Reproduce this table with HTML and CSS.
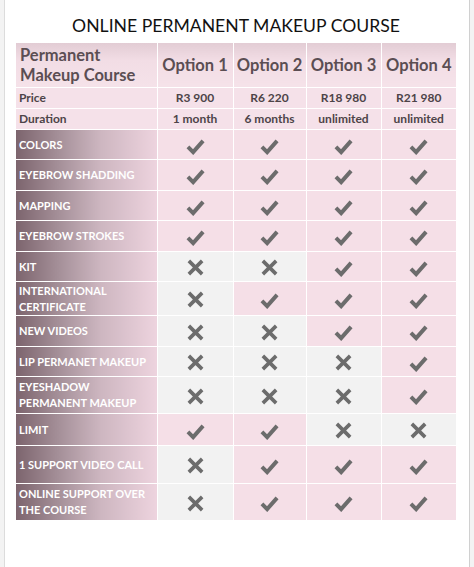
FILE: index.html
```html
<!DOCTYPE html>
<html>
<head>
<meta charset="utf-8">
<link rel="stylesheet" href="styles.css">
</head>
<body>
<svg class="defs" width="0" height="0">
  <symbol id="chk" viewBox="0 0 20 18"><path d="M2 9.5 L7.5 15 L18 3" fill="none" stroke="currentColor" stroke-width="4.2"/></symbol>
  <symbol id="crs" viewBox="0 0 20 20"><path d="M3 3 L17 17 M17 3 L3 17" fill="none" stroke="currentColor" stroke-width="3.8"/></symbol>
</svg>
<div class="page">
  <h1 class="title">ONLINE PERMANENT MAKEUP COURSE</h1>
  <table class="grid">
    <colgroup><col class="c0"><col class="c1"><col class="c2"><col class="c3"><col class="c4"></colgroup>
    <tr class="head"><th class="lbl">Permanent<br>Makeup Course</th><th>Option 1</th><th>Option 2</th><th>Option 3</th><th>Option 4</th></tr>
    <tr class="info r-price"><td class="lbl">Price</td><td>R3 900</td><td>R6 220</td><td>R18 980</td><td>R21 980</td></tr>
    <tr class="info r-dur"><td class="lbl">Duration</td><td>1 month</td><td>6 months</td><td>unlimited</td><td>unlimited</td></tr>
    <tr class="f h30"><td class="feat">COLORS</td><td class="y"><svg class="ic ck"><use href="#chk"/></svg></td><td class="y"><svg class="ic ck"><use href="#chk"/></svg></td><td class="y"><svg class="ic ck"><use href="#chk"/></svg></td><td class="y"><svg class="ic ck"><use href="#chk"/></svg></td></tr>
    <tr class="f h31"><td class="feat">EYEBROW SHADDING</td><td class="y"><svg class="ic ck"><use href="#chk"/></svg></td><td class="y"><svg class="ic ck"><use href="#chk"/></svg></td><td class="y"><svg class="ic ck"><use href="#chk"/></svg></td><td class="y"><svg class="ic ck"><use href="#chk"/></svg></td></tr>
    <tr class="f h30"><td class="feat">MAPPING</td><td class="y"><svg class="ic ck"><use href="#chk"/></svg></td><td class="y"><svg class="ic ck"><use href="#chk"/></svg></td><td class="y"><svg class="ic ck"><use href="#chk"/></svg></td><td class="y"><svg class="ic ck"><use href="#chk"/></svg></td></tr>
    <tr class="f h31"><td class="feat">EYEBROW STROKES</td><td class="y"><svg class="ic ck"><use href="#chk"/></svg></td><td class="y"><svg class="ic ck"><use href="#chk"/></svg></td><td class="y"><svg class="ic ck"><use href="#chk"/></svg></td><td class="y"><svg class="ic ck"><use href="#chk"/></svg></td></tr>
    <tr class="f h30"><td class="feat">KIT</td><td class="n"><svg class="ic cx"><use href="#crs"/></svg></td><td class="n"><svg class="ic cx"><use href="#crs"/></svg></td><td class="y"><svg class="ic ck"><use href="#chk"/></svg></td><td class="y"><svg class="ic ck"><use href="#chk"/></svg></td></tr>
    <tr class="f h34"><td class="feat">INTERNATIONAL<br>CERTIFICATE</td><td class="n"><svg class="ic cx"><use href="#crs"/></svg></td><td class="y"><svg class="ic ck"><use href="#chk"/></svg></td><td class="y"><svg class="ic ck"><use href="#chk"/></svg></td><td class="y"><svg class="ic ck"><use href="#chk"/></svg></td></tr>
    <tr class="f h31"><td class="feat">NEW VIDEOS</td><td class="n"><svg class="ic cx"><use href="#crs"/></svg></td><td class="n"><svg class="ic cx"><use href="#crs"/></svg></td><td class="y"><svg class="ic ck"><use href="#chk"/></svg></td><td class="y"><svg class="ic ck"><use href="#chk"/></svg></td></tr>
    <tr class="f h30"><td class="feat">LIP PERMANET MAKEUP</td><td class="n"><svg class="ic cx"><use href="#crs"/></svg></td><td class="n"><svg class="ic cx"><use href="#crs"/></svg></td><td class="n"><svg class="ic cx"><use href="#crs"/></svg></td><td class="y"><svg class="ic ck"><use href="#chk"/></svg></td></tr>
    <tr class="f h37"><td class="feat">EYESHADOW<br>PERMANENT MAKEUP</td><td class="n"><svg class="ic cx"><use href="#crs"/></svg></td><td class="n"><svg class="ic cx"><use href="#crs"/></svg></td><td class="n"><svg class="ic cx"><use href="#crs"/></svg></td><td class="y"><svg class="ic ck"><use href="#chk"/></svg></td></tr>
    <tr class="f h32"><td class="feat">LIMIT</td><td class="y"><svg class="ic ck"><use href="#chk"/></svg></td><td class="y"><svg class="ic ck"><use href="#chk"/></svg></td><td class="n"><svg class="ic cx"><use href="#crs"/></svg></td><td class="n"><svg class="ic cx"><use href="#crs"/></svg></td></tr>
    <tr class="f h38"><td class="feat">1 SUPPORT VIDEO CALL</td><td class="n"><svg class="ic cx"><use href="#crs"/></svg></td><td class="y"><svg class="ic ck"><use href="#chk"/></svg></td><td class="y"><svg class="ic ck"><use href="#chk"/></svg></td><td class="y"><svg class="ic ck"><use href="#chk"/></svg></td></tr>
    <tr class="f h37"><td class="feat">ONLINE SUPPORT OVER<br>THE COURSE</td><td class="n"><svg class="ic cx"><use href="#crs"/></svg></td><td class="y"><svg class="ic ck"><use href="#chk"/></svg></td><td class="y"><svg class="ic ck"><use href="#chk"/></svg></td><td class="y"><svg class="ic ck"><use href="#chk"/></svg></td></tr>
  </table>
</div>
</body>
</html>
```

FILE: styles.css
```css
html, body {
  margin: 0;
  padding: 0;
  background: #f3f3f3;
}
.defs {
  display: block;
  width: 0;
  height: 0;
  overflow: hidden;
}
.page {
  margin: 0 4px 0 4px;
  height: 567px;
  background: #ffffff;
  border-left: 1px solid #dcdcdc;
  border-right: 1px solid #d0d0d0;
  padding: 0 0 0 11px;
  box-sizing: border-box;
  font-family: Lato, "Open Sans", sans-serif;
}
.title {
  margin: 0;
  padding: 15px 0 0 0;
  height: 43px;
  box-sizing: border-box;
  width: 440px;
  text-align: center;
  font-size: 17.6px;
  font-weight: 400;
  line-height: 22px;
  color: #111;
  letter-spacing: 0;
}
.grid {
  border-collapse: collapse;
  table-layout: fixed;
  width: 440px;
}
.c0 { width: 141px; }
.c1 { width: 76px; }
.c2 { width: 73px; }
.c3 { width: 75px; }
.c4 { width: 75px; }
.grid td, .grid th {
  border: 1px solid #ffffff;
  padding: 0;
  text-align: center;
  vertical-align: middle;
}
.grid tr:first-child th { border-top: 0; }
.grid td:first-child, .grid th:first-child { border-left: 0; }
.grid td:last-child, .grid th:last-child { border-right: 0; }
.head th {
  height: 44px;
  background: linear-gradient(#e2ccd4, #f2dde5 40%, #f5e2e9);
  color: #5b4e53;
  font-size: 16.5px;
  font-weight: 700;
  line-height: 20px;
}
.head th.lbl {
  text-align: left;
  padding-left: 4px;
}
.info td {
  height: 20px;
  background: #f5e1e9;
  color: #4d4448;
  font-size: 12px;
  font-weight: 700;
  line-height: 14px;
}
.info td.lbl {
  text-align: left;
  padding-left: 3px;
}
.feat {
  text-align: left !important;
  padding-left: 3px !important;
  color: #ffffff;
  font-size: 11px;
  font-weight: 700;
  line-height: 16px;
  background: linear-gradient(90deg, #7c646d 0%, #a48f98 30%, #cdb6c0 60%, #edd3de 100%);
}
.h30 td { height: 29px; }
.h31 td { height: 30px; }
.h32 td { height: 31px; }
.h34 td { height: 33px; }
.h37 td { height: 36px; }
.h38 td { height: 37px; }
.y { background: #f5dfe7; }
.n { background: #f2f2f2; }
.ic {
  display: inline-block;
  vertical-align: middle;
  color: #6c6c6c;
}
.ck { width: 19px; height: 17px; }
.cx { width: 19px; height: 19px; }
```
